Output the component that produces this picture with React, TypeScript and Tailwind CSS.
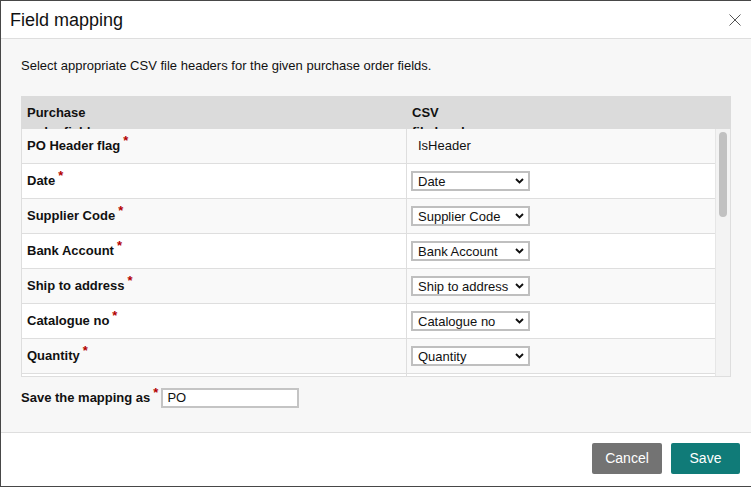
import React from 'react';

const rows: { label: string; value: string; select: boolean }[] = [
  { label: 'PO Header flag', value: 'IsHeader', select: false },
  { label: 'Date', value: 'Date', select: true },
  { label: 'Supplier Code', value: 'Supplier Code', select: true },
  { label: 'Bank Account', value: 'Bank Account', select: true },
  { label: 'Ship to address', value: 'Ship to address', select: true },
  { label: 'Catalogue no', value: 'Catalogue no', select: true },
  { label: 'Quantity', value: 'Quantity', select: true },
  { label: 'Unit price', value: 'Unit price', select: true },
];

function Required() {
  return <span className="relative -top-[5px] ml-[3px] text-[13px] font-bold text-[#b30000]">*</span>;
}

function FakeSelect({ value }: { value: string }) {
  return (
    <div className="flex h-[20px] w-[119px] items-center justify-between border-2 border-[#bfbfbf] bg-white pl-[5px] pr-[4px] text-[13px] leading-none text-[#111]">
      <span className="whitespace-nowrap">{value}</span>
      <svg width="9" height="6" viewBox="0 0 9 6" className="shrink-0">
        <path d="M1 1l3.5 3.5L8 1" fill="none" stroke="#111" strokeWidth="1.9" />
      </svg>
    </div>
  );
}

export default function App() {
  return (
    <div className="flex h-[487px] w-[751px] flex-col border-b border-l border-t border-[#474747] bg-white font-['Liberation_Sans',Arial,sans-serif] text-[#111]">
      {/* Header */}
      <div className="flex h-[38px] shrink-0 items-center justify-between border-b border-[#dedede] pl-[9px] pr-[10px]">
        <h1 className="text-[18px] leading-none">Field mapping</h1>
        <svg width="12" height="12" viewBox="0 0 12 12" className="mt-[1px]">
          <path d="M0.5 0.5l11 11M11.5 0.5l-11 11" stroke="#555" strokeWidth="1" />
        </svg>
      </div>

      {/* Body */}
      <div className="flex h-[393px] shrink-0 flex-col bg-[#f7f7f7] pl-[20px] pr-[19px]">
        <p className="pt-[19px] text-[13px] leading-[16px]">
          Select appropriate CSV file headers for the given purchase order fields.
        </p>

        <div className="mt-[22px] w-[710px]">
          {/* table head: second line is clipped by the row height */}
          <div className="flex h-[33px] overflow-hidden bg-[#dbdbdb] text-[13px] font-bold leading-[19px]">
            <div className="w-[386px] shrink-0 pl-[6px] pt-[7px]">
              Purchase
              <br />
              order field
            </div>
            <div className="pl-[5px] pt-[7px]">
              CSV
              <br />
              file header
            </div>
          </div>

          {/* table body */}
          <div className="flex h-[248px] border-b border-l border-r border-[#dedede]">
            <div className="flex-1 overflow-hidden">
              {rows.map((r, i) => (
                <div
                  key={r.label}
                  className={`flex h-[35px] shrink-0 border-b border-[#dedede] ${i % 2 === 0 ? 'bg-[#f9f9f9]' : 'bg-white'}`}
                >
                  <div className="flex w-[385px] shrink-0 items-center border-r border-[#dedede] pl-[5px] text-[13px] font-bold">
                    {r.label}
                    <Required />
                  </div>
                  <div className="flex flex-1 items-center pl-[4px] text-[13px]">
                    {r.select ? <FakeSelect value={r.value} /> : <span className="pl-[7px]">{r.value}</span>}
                  </div>
                </div>
              ))}
            </div>
            {/* scrollbar */}
            <div className="w-[15px] shrink-0 border-l border-[#e6e6e6] bg-[#f3f3f3] pl-[3px] pt-[3px]">
              <div className="h-[85px] w-[8px] rounded-full bg-[#c1c1c1]" />
            </div>
          </div>
        </div>

        <div className="mt-[11px] flex items-center">
          <span className="text-[13px] font-bold">Save the mapping as</span>
          <Required />
          <div className="ml-[3px] flex h-[20px] w-[138px] items-center border-2 border-[#c4c4c4] bg-white pl-[4px] text-[13px]">
            PO
          </div>
        </div>
      </div>

      {/* Footer */}
      <div className="flex flex-1 items-start justify-end gap-[9px] border-t border-[#dedede] pr-[11px] pt-[10px]">
        <button className="h-[31px] w-[70px] rounded-[2px] bg-[#737373] text-[14px] text-white">Cancel</button>
        <button className="h-[31px] w-[69px] rounded-[2px] bg-[#107b78] text-[14px] text-white">Save</button>
      </div>
    </div>
  );
}
